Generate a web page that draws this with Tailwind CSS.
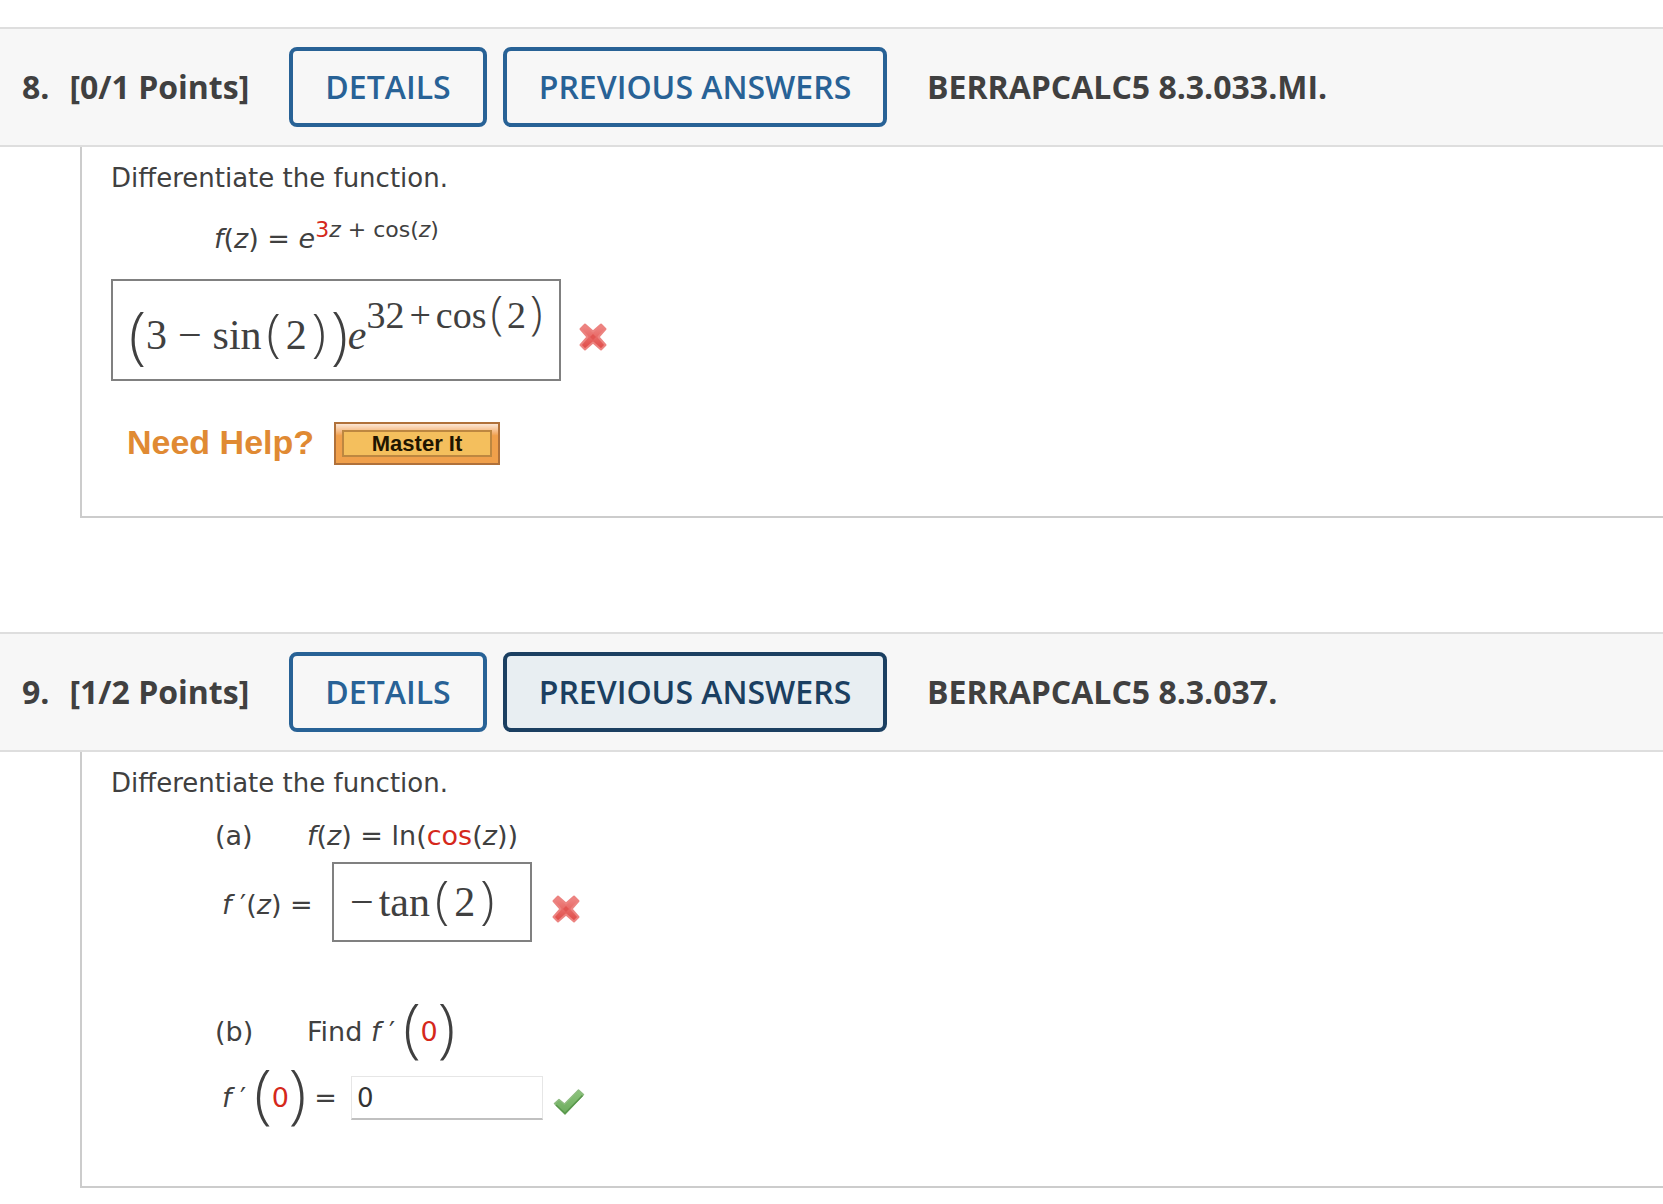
<!DOCTYPE html>
<html lang="en">
<head>
  <meta charset="UTF-8">
  <meta name="viewport" content="width=device-width, initial-scale=1.0">
  <title>Assignment</title>
  <script src="https://cdn.jsdelivr.net/npm/@tailwindcss/browser@4"></script>
</head>
<body class="bg-white text-[#404040] font-['DejaVu_Sans',sans-serif] text-[26px] leading-8">

  <!-- Cross and tick marks -->
  <svg class="absolute size-0" aria-hidden="true">
    <defs>
      <linearGradient id="red" x1="0" y1="0" x2="0" y2="1">
        <stop offset="0" stop-color="#f08a88" />
        <stop offset="1" stop-color="#df4a46" />
      </linearGradient>
      <linearGradient id="green" x1="0" y1="0" x2="0" y2="1">
        <stop offset="0" stop-color="#8cc47c" />
        <stop offset="1" stop-color="#6bab5c" />
      </linearGradient>
    </defs>
    <symbol id="cross" viewBox="0 0 28 28">
      <path d="M6 1.5 14 8.5 22 1.5 26.5 6 19.5 14 26.5 22 22 26.5 14 19.5 6 26.5 1.5 22 8.5 14 1.5 6Z" fill="url(#red)" stroke="#ec8380" stroke-width="2" stroke-linejoin="round" />
      <path d="M14 11 17 14 14 17 11 14Z" fill="#e25552" />
    </symbol>
    <symbol id="tick" viewBox="0 0 32 28">
      <path d="M1.5 15.5 6 11.5 11.5 16 25.5 2 30.5 6.5 12 26Z" fill="url(#green)" stroke="#8dbb80" stroke-width="1.5" stroke-linejoin="round" />
      <path d="M3 17 12 25.5 29.5 7.5" fill="none" stroke="#57974a" stroke-width="1.5" />
    </symbol>
  </svg>

  <main class="pt-[27px]">

    <!-- Question 8 -->
    <section class="mb-[114px]">
      <header class="flex items-center border-y-2 border-[#dedede] bg-[#f7f7f7] py-[18px] pl-[22px] font-['Open_Sans',sans-serif] text-[32px] font-bold">
        <h2 class="flex w-[267px] gap-5"><span>8.</span><span>[0/1 Points]</span></h2>
        <button class="h-20 w-[198px] rounded-lg border-4 border-[#286296] font-semibold text-[#286296]">DETAILS</button>
        <button class="ml-4 h-20 w-[384px] rounded-lg border-4 border-[#286296] font-semibold text-[#286296]">PREVIOUS ANSWERS</button>
        <span class="ml-10">BERRAPCALC5 8.3.033.MI.</span>
      </header>

      <div class="ml-20 border-b-2 border-l-2 border-[#cccccc] pt-[15px] pb-[51px] pl-[29px]">
        <p>Differentiate the function.</p>
        <p class="mt-[25px] ml-[103px] text-[27px]"><i>f</i>(<i>z</i>) = <i>e</i><span class="align-[11px] text-[22px] leading-none"><span class="text-[#d5281b]">3</span><i>z</i> + cos(<i>z</i>)</span></p>

        <div class="mt-6 flex items-center gap-[18px]">
          <div role="textbox" aria-label="Derivative of f" class="flex h-[102px] items-center border-2 border-[#808080] pt-[10px] pr-4 pl-4 font-['Liberation_Serif',serif] text-[42px] leading-none">
            <span class="mb-1 font-['Open_Sans',sans-serif] text-[62px] font-light">(</span>
            <span>3</span>
            <span class="mx-[11px]">−</span>
            <span>sin</span>
            <span class="mx-[5px] mb-2 font-['Open_Sans',sans-serif] text-[52px] font-light">(</span>
            <span>2</span>
            <span class="mx-[5px] mb-2 font-['Open_Sans',sans-serif] text-[52px] font-light">)</span>
            <span class="mb-1 font-['Open_Sans',sans-serif] text-[62px] font-light">)</span>
            <i>e</i>
            <span class="mb-10 flex items-center text-[38px]">
              <span>32</span>
              <span class="mx-[5px]">+</span>
              <span>cos</span>
              <span class="mx-1 mb-2 font-['Open_Sans',sans-serif] text-[46px] font-light">(</span>
              <span>2</span>
              <span class="ml-1 mb-2 font-['Open_Sans',sans-serif] text-[46px] font-light">)</span>
            </span>
          </div>
          <svg class="mt-[14px] size-7" role="img" aria-label="Incorrect"><use href="#cross" /></svg>
        </div>

        <div class="mt-[41px] ml-4 flex items-center gap-5 font-['Liberation_Sans',sans-serif] font-bold">
          <span class="pb-1 text-[34px] text-[#e08a33]">Need Help?</span>
          <button class="h-[43px] w-[166px] border-2 border-[#b0713a] bg-linear-to-b from-[#fbe6d4] via-[#f0a04b] via-30% to-[#f0a04b] p-[6px] text-[22px] leading-none text-[#1f1500]">
            <span class="flex h-full items-center justify-center border-2 border-[#bd8740] bg-[#f4bf5d]">Master It</span>
          </button>
        </div>
      </div>
    </section>

    <!-- Question 9 -->
    <section>
      <header class="flex items-center border-y-2 border-[#dedede] bg-[#f7f7f7] py-[18px] pl-[22px] font-['Open_Sans',sans-serif] text-[32px] font-bold">
        <h2 class="flex w-[267px] gap-5"><span>9.</span><span>[1/2 Points]</span></h2>
        <button class="h-20 w-[198px] rounded-lg border-4 border-[#286296] font-semibold text-[#286296]">DETAILS</button>
        <button class="ml-4 h-20 w-[384px] rounded-lg border-4 border-[#1b3f61] bg-[#e8eef2] font-semibold text-[#1b3f61]">PREVIOUS ANSWERS</button>
        <span class="ml-10">BERRAPCALC5 8.3.037.</span>
      </header>

      <div class="ml-20 border-b-2 border-l-2 border-[#cccccc] pt-[15px] pb-[55px] pl-[29px]">
        <p>Differentiate the function.</p>

        <div class="ml-[104px] text-[27px]">
          <p class="mt-[21px] flex"><span class="w-[92px]">(a)</span><span><i>f</i>(<i>z</i>) = ln(<span class="text-[#d5281b]">cos</span>(<i>z</i>))</span></p>
          <div class="mt-[10px] ml-[7px] flex items-center">
            <span class="w-[110px] pt-[6px] whitespace-nowrap"><i>f</i> ′(<i>z</i>) =</span>
            <div role="textbox" aria-label="f prime of z" class="flex h-20 w-[200px] items-center border-2 border-[#808080] px-4 font-['Liberation_Serif',serif] text-[42px] leading-none">
              <span>−</span>
              <span class="ml-[5px]">tan</span>
              <span class="mx-[5px] mb-2 font-['Open_Sans',sans-serif] text-[52px] font-light">(</span>
              <span>2</span>
              <span class="mx-[5px] mb-2 font-['Open_Sans',sans-serif] text-[52px] font-light">)</span>
            </div>
            <svg class="mt-[14px] ml-5 size-7" role="img" aria-label="Incorrect"><use href="#cross" /></svg>
          </div>

          <p class="mt-[57px] flex h-[66px] items-center"><span class="w-[92px]">(b)</span><span>Find <i>f</i> ′</span><span class="mb-3 ml-2 font-['Open_Sans',sans-serif] text-[64px] leading-none font-light">(</span><span class="text-[#d5281b]">0</span><span class="mb-3 font-['Open_Sans',sans-serif] text-[64px] leading-none font-light">)</span></p>
          <div class="ml-[7px] flex h-[66px] items-center">
            <label for="answer-b" class="flex w-[129px] items-center whitespace-nowrap"><span><i>f</i> ′</span><span class="mb-3 ml-2 font-['Open_Sans',sans-serif] text-[64px] leading-none font-light">(</span><span class="text-[#d5281b]">0</span><span class="mb-3 font-['Open_Sans',sans-serif] text-[64px] leading-none font-light">)</span><span class="ml-2">=</span></label>
            <input id="answer-b" type="text" value="0" class="h-11 w-48 border border-b-2 border-[#e6e6e6] border-b-[#c0c0c0] px-[5px] text-[26px] text-[#333333]">
            <svg class="mt-2 ml-[10px] h-7 w-8" role="img" aria-label="Correct"><use href="#tick" /></svg>
          </div>
        </div>
      </div>
    </section>
  </main>

</body>
</html>
